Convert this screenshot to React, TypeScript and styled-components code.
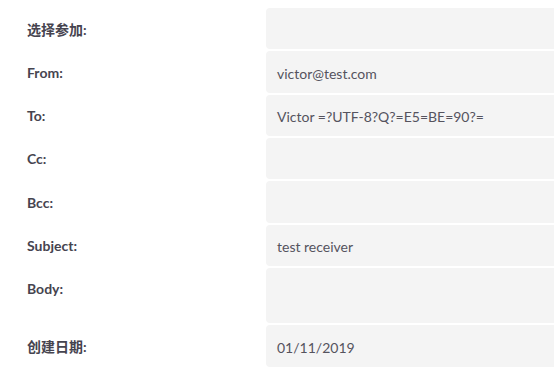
import React from "react";
import styled, { createGlobalStyle } from "styled-components";

const Global = createGlobalStyle`
  html, body {
    margin: 0;
    padding: 0;
    background: #ffffff;
    overflow: hidden;
  }
  body {
    font-family: Lato, "Noto Sans CJK SC", sans-serif;
  }
`;

const Table = styled.div`
  display: flex;
  flex-direction: column;
  gap: 2px;
  padding-top: 8px;
  width: 554px;
`;

const Row = styled.div`
  display: flex;
  align-items: stretch;
`;

const Label = styled.div`
  width: 239px;
  flex: none;
  padding: 11.5px 0 0 27px;
  font-family: Lato, "Noto Sans CJK SC", sans-serif;
  font-weight: 700;
  font-size: 14px;
  line-height: 20px;
  color: #46444f;
`;

const Value = styled.div<{ $tall?: boolean }>`
  flex: 1;
  margin-right: -12px;
  box-sizing: border-box;
  height: ${(p) => (p.$tall ? "55.33px" : "41.33px")};
  padding: 12.6px 11px 0 11px;
  background: #f4f4f4;
  border-radius: 4px;
  font-family: Lato, "Noto Sans CJK SC", sans-serif;
  font-size: 14px;
  line-height: 20px;
  color: #55535e;
  white-space: nowrap;
`;

const rows: { label: string; value: string; tall?: boolean }[] = [
  { label: "选择参加:", value: "" },
  { label: "From:", value: "victor@test.com" },
  { label: "To:", value: "Victor =?UTF-8?Q?=E5=BE=90?=" },
  { label: "Cc:", value: "" },
  { label: "Bcc:", value: "" },
  { label: "Subject:", value: "test receiver" },
  { label: "Body:", value: "", tall: true },
  { label: "创建日期:", value: "01/11/2019" },
];

export default function App() {
  return (
    <>
      <Global />
      <Table>
        {rows.map((r) => (
          <Row key={r.label}>
            <Label>{r.label}</Label>
            <Value $tall={r.tall}>{r.value}</Value>
          </Row>
        ))}
      </Table>
    </>
  );
}
